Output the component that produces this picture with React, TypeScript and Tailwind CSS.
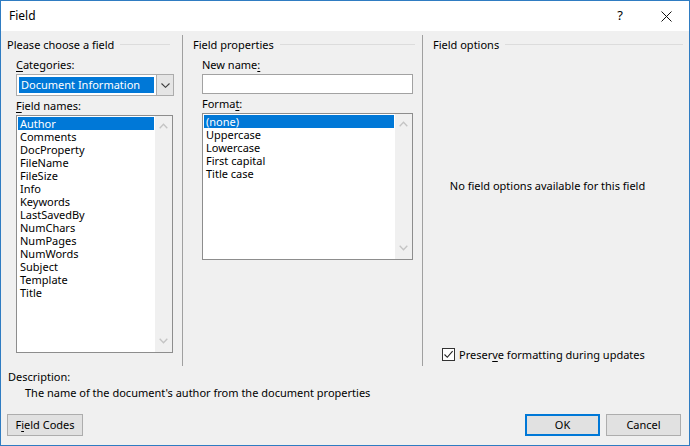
import React from "react";

const FIELDS = [
  "Author",
  "Comments",
  "DocProperty",
  "FileName",
  "FileSize",
  "Info",
  "Keywords",
  "LastSavedBy",
  "NumChars",
  "NumPages",
  "NumWords",
  "Subject",
  "Template",
  "Title",
];
const FORMATS = ["(none)", "Uppercase", "Lowercase", "First capital", "Title case"];

function UpArrow() {
  return (
    <svg width="9" height="6" viewBox="0 0 9 6">
      <path d="M0.7 5.2 L4.5 1.2 L8.3 5.2" stroke="#c4c4c4" strokeWidth="1.3" fill="none" />
    </svg>
  );
}
function DownArrow() {
  return (
    <svg width="9" height="6" viewBox="0 0 9 6">
      <path d="M0.7 0.8 L4.5 4.8 L8.3 0.8" stroke="#c4c4c4" strokeWidth="1.3" fill="none" />
    </svg>
  );
}

function ListBox({ items, w, h, rowW }: { items: string[]; w: string; h: string; rowW: string }) {
  return (
    <div className={`flex border border-[#8d8d8d] bg-white ${w} ${h}`}>
      <div className="flex-1 p-px">
        {items.map((it, i) => (
          <div
            key={it}
            className={`h-[13px] leading-[13px] pl-[2px] whitespace-nowrap ${rowW} ${
              i === 0 ? "bg-[#0078d7] text-white" : "text-black"
            }`}
          >
            {it}
          </div>
        ))}
      </div>
      <div className="w-[17px] bg-[#f0f0f0] flex flex-col items-center justify-between pt-[7px] pb-[8px]">
        <UpArrow />
        <DownArrow />
      </div>
    </div>
  );
}

function Header({ title, cls }: { title: string; cls: string }) {
  return (
    <div className={`flex items-center h-[15px] mt-[2px] ${cls}`}>
      <span className="whitespace-nowrap leading-[15px]">{title}</span>
      <div className="flex-1 h-px bg-[#dcdcdc] ml-[6px]" />
    </div>
  );
}

export default function App() {
  return (
    <div className="w-[690px] h-[446px] border border-[#2f7cc2] bg-[#f0f0f0] flex flex-col font-['Noto_Sans',sans-serif] text-[11px] text-black overflow-hidden">
      {/* title bar */}
      <div className="h-[30px] bg-white flex items-center justify-between shrink-0">
        <span className="pl-[8px] text-[12px] leading-none">Field</span>
        <div className="flex items-center h-full">
          <div className="w-[46px] h-full flex items-center justify-center text-[13px] ml-[1px]">?</div>
          <div className="w-[46px] h-full flex items-center justify-center">
            <svg width="11" height="11" viewBox="0 0 11 11">
              <path d="M0.5 0.5 L10.5 10.5 M10.5 0.5 L0.5 10.5" stroke="#111" strokeWidth="1" fill="none" />
            </svg>
          </div>
        </div>
      </div>

      {/* main columns */}
      <div className="flex mt-[4px] h-[331px] shrink-0">
        {/* column 1 */}
        <div className="w-[181px] flex flex-col">
          <Header title="Please choose a field" cls="pl-[6px] pr-[12px]" />
          <div className="pl-[15px] mt-[5px] leading-[15px] h-[15px]">
            <span className="underline underline-offset-2">C</span>ategories:
          </div>
          <div className="ml-[15px] mt-[2px] flex h-[22px] w-[158px] border border-[#acacac] bg-white">
            <div className="flex-1 p-[2px]">
              <div className="h-full bg-[#0078d7] text-white leading-[16px] pl-[2px] whitespace-nowrap">
                Document Information
              </div>
            </div>
            <div className="w-[17px] bg-[#e5e5e5] border-l border-[#acacac] flex items-center justify-center">
              <svg width="9" height="5" viewBox="0 0 9 5">
                <path d="M0.5 0.5 L4.5 4.3 L8.5 0.5" stroke="#3c3c3c" strokeWidth="1.1" fill="none" />
              </svg>
            </div>
          </div>
          <div className="pl-[15px] mt-[2px] leading-[15px] h-[15px]">
            <span className="underline underline-offset-2">F</span>ield names:
          </div>
          <div className="ml-[15px] mt-[2px]">
            <ListBox items={FIELDS} w="w-[157px]" h="h-[238px]" rowW="w-[136px]" />
          </div>
        </div>
        <div className="w-px bg-[#a0a0a0]" />

        {/* column 2 */}
        <div className="w-[239px] flex flex-col">
          <Header title="Field properties" cls="pl-[10px] pr-[7px]" />
          <div className="pl-[19px] mt-[5px] leading-[15px] h-[15px]">
            New name<span className="underline underline-offset-2">:</span>
          </div>
          <div className="ml-[19px] mt-[2px] w-[211px] h-[20px] border border-[#a2a2a2] bg-white" />
          <div className="pl-[19px] mt-[2px] leading-[15px] h-[15px]">
            Forma<span className="underline underline-offset-2">t</span>:
          </div>
          <div className="ml-[19px] mt-[2px]">
            <ListBox items={FORMATS} w="w-[211px]" h="h-[147px]" rowW="w-[190px]" />
          </div>
        </div>
        <div className="w-px bg-[#a0a0a0]" />

        {/* column 3 */}
        <div className="flex-1 flex flex-col">
          <Header title="Field options" cls="pl-[10px] pr-[6px]" />
          <div className="mt-[126px] h-[15px] leading-[15px] text-center pr-[17px]">
            No field options available for this field
          </div>
          <div className="mt-auto mb-[4px] pl-[19px] flex items-center h-[15px]">
            <div className="w-[13px] h-[13px] border border-[#333] bg-white flex items-center justify-center">
              <svg width="11" height="11" viewBox="0 0 11 11">
                <path d="M1.5 5.5 L4.3 8.3 L9.6 2.2" stroke="#222" strokeWidth="1.1" fill="none" />
              </svg>
            </div>
            <span className="ml-[4px] leading-[15px] whitespace-nowrap">
              Preser<span className="underline underline-offset-2">v</span>e formatting during updates
            </span>
          </div>
        </div>
      </div>

      {/* description */}
      <div className="pl-[7px] mt-[3px] leading-[15px] h-[15px]">Description:</div>
      <div className="pl-[24px] mt-[1px] leading-[15px] h-[15px]">
        The name of the document's author from the document properties
      </div>

      {/* buttons */}
      <div className="flex items-center mt-[14px] px-[6px]">
        <div className="w-[76px] h-[22px] border border-[#adadad] bg-[#e1e1e1] flex items-center justify-center">
          F<span className="underline underline-offset-2">i</span>eld Codes
        </div>
        <div className="flex-1" />
        <div className="w-[75px] h-[22px] border-2 border-[#0078d7] bg-[#e1e1e1] flex items-center justify-center">
          OK
        </div>
        <div className="w-[75px] h-[22px] ml-[6px] mr-[2px] border border-[#adadad] bg-[#e1e1e1] flex items-center justify-center">
          Cancel
        </div>
      </div>
    </div>
  );
}
